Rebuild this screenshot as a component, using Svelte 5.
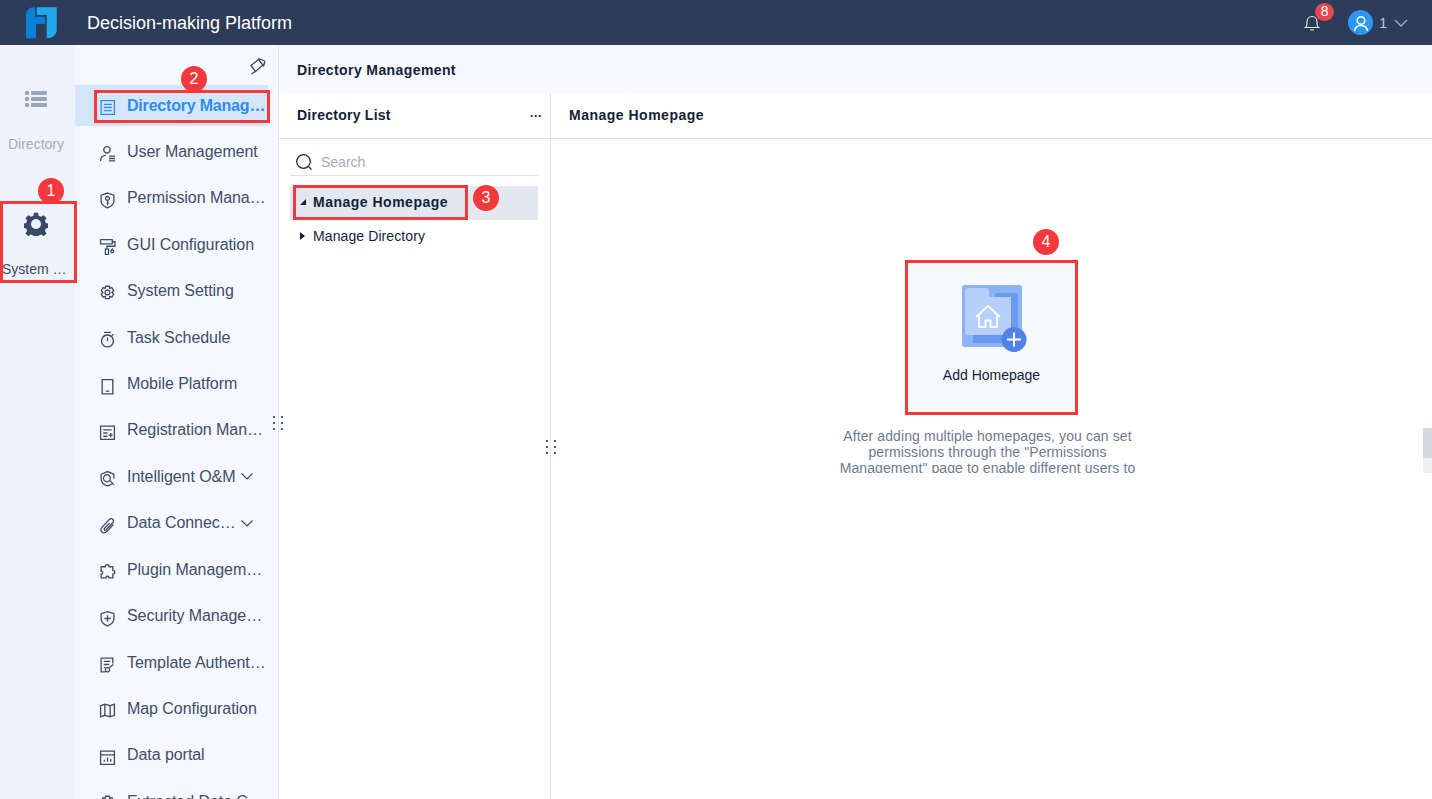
<script lang="ts">
// side menu, top to bottom
const menu = [
	{ label: "Directory Management", icon: "list", active: true },
	{ label: "User Management", icon: "user" },
	{ label: "Permission Management", icon: "shield" },
	{ label: "GUI Configuration", icon: "roller" },
	{ label: "System Setting", icon: "gear" },
	{ label: "Task Schedule", icon: "timer" },
	{ label: "Mobile Platform", icon: "phone" },
	{ label: "Registration Management", icon: "reg" },
	{ label: "Intelligent O&M", icon: "search", more: true },
	{ label: "Data Connection", icon: "clip", more: true },
	{ label: "Plugin Management", icon: "plugin" },
	{ label: "Security Management", icon: "secure" },
	{ label: "Template Authentication", icon: "template" },
	{ label: "Map Configuration", icon: "map" },
	{ label: "Data portal", icon: "portal" },
	{ label: "Extracted Data Configuration", icon: "gear" },
];

const icons: Record<string, string> = {
	list: "M2 1.500h12.500v13H2zM4.500 5h7.500M4.500 8h7.500M4.500 11h7.500",
	user: "M7.500 1.500a3 3 0 1 1-.01 0zM1.500 15c0-3.200 2-5.200 5-5.500M9.500 10.500h5.500M9.500 12.700h5.500M9.500 15h5.500",
	shield: "M8 1l6 2v5.500c0 3-2.500 5.200-6 6.500-3.500-1.300-6-3.500-6-6.500V3zM8 4.200a1.800 1.800 0 1 1-.01 0zM8 7.800v4.700M8 10.500h1.500",
	roller: "M1.500 1.500h11v4h-11zM12.500 3.500h2.500v4.300H7.500v2.700M6 10.500h3v5H6zM12.500 10.500l1.200 1.500a1.300 1.300 0 1 1-2.400 0z",
	gear: "M6.300 1.200h3.400l.500 2 1.900-.700 1.700 2.900-1.500 1.600 1.500 1.600-1.700 2.900-1.900-.700-.500 2H6.300l-.500-2-1.900.700-1.700-2.900L3.700 7 2.200 5.400l1.700-2.900 1.900.700zM8 4.700a2.300 2.300 0 1 1-.01 0z",
	timer: "M8 3.800a5.600 5.600 0 1 1-.01 0zM4.800 1.300h6.400M8 6v3.500M12.300 4.200l1.200-1.200",
	phone: "M3 1.500h10v13.500H3zM6.300 12.300h3.400",
	reg: "M1.500 2h13v12.500h-13zM4 5.500h8M4 8.500h4M4 11.500h4M11 8.500v4M9 10.500h4",
	search: "M2 4l6-2.500L14 4v4M13 12.500c-1.500 1.300-3.200 2-5 2.500-3.500-1-6-3.500-6-7V4M7.500 4.500a3.300 3.300 0 1 1-.01 0zM10 9.500l4 4.500",
	clip: "M13.500 7l-6 6.500c-1.500 1.500-3.500 1.800-4.800.600-1.300-1.300-.900-3.300.500-4.800l6.300-6.800c1-1 2.500-1.200 3.500-.300 1 1 .700 2.400-.300 3.400l-6 6.400c-.500.500-1.200.600-1.600.200-.400-.400-.300-1.100.200-1.600l4.700-5.100",
	plugin: "M6 3.500c0-2.500 3.500-2.500 3.500 0H13v3.500c2.500 0 2.500 3.500 0 3.500v3.500H9.500c0-2-3-2-3 0H2v-3.500c2 0 2-3 0-3V3.500z",
	secure: "M8 1.500l6 2v5c0 3-2.500 5-6 6.500-3.500-1.500-6-3.500-6-6.500v-5zM8 5v6M5 8h6",
	template: "M13 7V2H2v13h4M4.500 5h6M4.500 8h5M4.500 11h1.500M8 11a2 2 0 1 1-.01 0zM9.500 11l4-3",
	map: "M1.500 3.500l4-1.500 5 1.500 4-1.500v10.500l-4 1.500-5-1.500-4 1.500zM5.500 2v10.500M10.500 3.500V14",
	portal: "M1.500 2h13v12.500h-13zM1.500 5.500h13M5 12V10M8 12V8M11 12V9.500",
};

const handles = [
	{ x: 270, y: 414 },
	{ x: 543, y: 438 },
];

const marks = [
	{ n: 1, x: 38, y: 178 },
	{ n: 2, x: 181, y: 66 },
	{ n: 3, x: 473, y: 185 },
	{ n: 4, x: 1033, y: 229 },
];

const boxes = [
	{ x: 0, y: 201, w: 77, h: 82 },
	{ x: 94, y: 90, w: 176, h: 33 },
	{ x: 293, y: 185, w: 175, h: 35 },
	{ x: 905, y: 260, w: 173, h: 155 },
];
</script>

<div class="app">
	<header class="top">
		<svg class="logo" viewBox="0 0 32 32" width="32" height="32">
			<path fill="#0b80d8" d="M1 8C1 3.500 4.500.3 8.500.3H10v9.400h10V17h-9v14.300H1z" />
			<path fill="#1fa8ec" d="M11.700.3h20V23c0 4.500-4 8.300-9.700 8.300h-.3V8h-10z" />
		</svg>
		<div class="brand">Decision-making Platform</div>
		<div class="top-right">
			<div class="bell">
				<svg viewBox="0 0 18 18" width="18" height="18" fill="none" stroke="#e4e7ec" stroke-width="1.200">
					<path d="M2.500 13.500c1.500-1 1.500-3 1.500-5.500 0-3 2-5.500 5-5.500s5 2.500 5 5.500c0 2.500 0 4.500 1.500 5.500zM7 16h4" />
				</svg>
				<span class="count">8</span>
			</div>
			<div class="avatar">
				<svg viewBox="0 0 24 24" width="24" height="24" fill="none" stroke="#fff" stroke-width="1.600">
					<circle cx="12" cy="9.500" r="3.800" />
					<path d="M5.500 20c.5-3.500 3-5.500 6.500-5.500s6 2 6.500 5.500" />
				</svg>
			</div>
			<span class="uname">1</span>
			<svg class="caret" viewBox="0 0 14 8" width="14" height="8" fill="none" stroke="#a3adbc" stroke-width="1.300">
				<path d="M1 1l6 6 6-6" />
			</svg>
		</div>
	</header>

	<div class="body">
		<nav class="rail">
			<div class="rail-item dir">
				<svg viewBox="0 0 24 20" width="24" height="20" fill="#9aa5b8">
					<rect x="1" y="2" width="4" height="4" rx="1" />
					<rect x="7" y="2" width="16" height="4" rx="1" />
					<rect x="1" y="8" width="4" height="4" rx="1" />
					<rect x="7" y="8" width="16" height="4" rx="1" />
					<rect x="1" y="14" width="4" height="4" rx="1" />
					<rect x="7" y="14" width="16" height="4" rx="1" />
				</svg>
				<span>Directory</span>
			</div>
			<div class="rail-item sys">
				<svg viewBox="0 0 24 24" width="24" height="24">
					<path fill="#3a4a66" fill-rule="evenodd" d="M10 .8h4l.7 3 2.300 1 2.700-1.600 2.800 2.800-1.600 2.700 1 2.300 3 .7v4l-3 .7-1 2.300 1.600 2.700-2.800 2.800-2.700-1.600-2.300 1-.7 3h-4l-.7-3-2.300-1-2.700 1.600-2.800-2.800 1.600-2.700-1-2.300-3-.7v-4l3-.7 1-2.300-1.600-2.700 2.800-2.800 2.700 1.600 2.300-1zM12 7a5 5 0 1 0 .01 0z" />
				</svg>
				<span class="ell">System Management</span>
			</div>
		</nav>

		<aside class="menu">
			<div class="pin">
				<svg viewBox="0 0 18 18" width="18" height="18" fill="none" stroke="#3a4a66" stroke-width="1.300">
					<path d="M2 8.500l7.500-6L14 8l-7.500 6.500zM9 1.500l7 2.500M14.500 9.500L16 4M6 14.500L2.500 17" />
				</svg>
			</div>
			<ul>
				{#each menu as item}
					<li class:active={item.active}>
						<svg class="ico" viewBox="0 0 16 16" width="17" height="17" fill="none" stroke="currentColor" stroke-width="1.250">
							<path d={icons[item.icon]} />
						</svg>
						<span class="label" class:short={item.more}>{item.label}</span>
						{#if item.more}
							<svg class="chev" viewBox="0 0 12 7" width="12" height="7" fill="none" stroke="#3a4a66" stroke-width="1.200">
								<path d="M.5.500L6 6 11.500.500" />
							</svg>
						{/if}
					</li>
				{/each}
			</ul>
		</aside>

		<main class="content">
			<div class="crumb">Directory Management</div>
			<div class="panels">
				<section class="list">
					<div class="head">
						<span class="list-title">Directory List</span>
						<span class="dots">···</span>
					</div>
					<div class="search">
						<svg viewBox="0 0 18 18" width="18" height="18" fill="none" stroke="#1f2d45" stroke-width="1.300">
							<circle cx="8.500" cy="8.500" r="6.800" />
							<path d="M13.500 13.500l3 3" />
						</svg>
						<span>Search</span>
					</div>
					<div class="node open"><i></i>Manage Homepage</div>
					<div class="node"><i></i>Manage Directory</div>
				</section>
				<section class="home">
					<div class="head">Manage Homepage</div>
					<div class="empty">
						<button class="add">
							<svg viewBox="0 0 66 68" width="66" height="68">
								<rect x="0" y="0" width="60" height="62" rx="3" fill="#8cb2f6" />
								<rect x="33" y="8" width="23" height="50" rx="3" fill="#6a9af0" />
								<rect x="11" y="48" width="45" height="10" fill="#6a9af0" />
								<path fill="#b7d0fb" d="M3 6a3 3 0 0 1 3-3h18a3 3 0 0 1 3 3v6h22v38H6a3 3 0 0 1-3-3z" />
								<path fill="none" stroke="#fff" stroke-width="1.800" d="M14 32l12-11 12 11M17 29.500V42h6.500v-6.500h5V42H35V29.500" />
								<circle cx="52" cy="54.500" r="12.500" fill="#4f83e6" />
								<path stroke="#fff" stroke-width="2" d="M45 54.500h14M52 47.500v14" />
							</svg>
							<span>Add Homepage</span>
						</button>
						<p>After adding multiple homepages, you can set permissions through the "Permissions Management" page to enable different users to see different homepages.</p>
					</div>
					<div class="thumb"></div>
				</section>
			</div>
		</main>
	</div>

	{#each handles as h}
		<div class="handle" style="left: {h.x}px; top: {h.y}px"></div>
	{/each}
	{#each boxes as b}
		<div class="box" style="left: {b.x}px; top: {b.y}px; width: {b.w}px; height: {b.h}px"></div>
	{/each}
	{#each marks as m}
		<div class="mark" style="left: {m.x}px; top: {m.y}px">{m.n}</div>
	{/each}
</div>

<style>
:global(body) {
	margin: 0;
}

.app {
	position: relative;
	width: 1432px;
	height: 799px;
	overflow: hidden;
	font-family: "Liberation Sans", Arial, sans-serif;
	background: #fff;
}

.top {
	display: flex;
	align-items: center;
	height: 45px;
	padding: 0 24px 0 25px;
	background: #2c3c59;
	color: #fff;
}

.logo {
	margin-right: 30px;
}

.brand {
	padding-top: 2px;
	font-size: 18px;
}

.top-right {
	display: flex;
	align-items: center;
	margin-left: auto;
}

.bell {
	position: relative;
	display: flex;
	margin-right: 27px;
}

.count {
	position: absolute;
	top: -11px;
	left: 12px;
	width: 19px;
	height: 18px;
	border-radius: 9px;
	background: #e5484d;
	font-size: 14px;
	line-height: 17px;
	text-align: center;
}

.avatar {
	display: flex;
	align-items: center;
	justify-content: center;
	width: 25px;
	height: 25px;
	border-radius: 50%;
	background: #2d96f3;
}

.uname {
	margin: 0 7px 0 6px;
	font-size: 14px;
	color: #c4cad4;
}

.body {
	display: flex;
	height: 754px;
}

.rail {
	flex: none;
	width: 75px;
	padding-right: 3px;
	box-sizing: border-box;
	background: #edf2fc;
}

.rail-item {
	display: flex;
	flex-direction: column;
	align-items: center;
	font-size: 14px;
}

.rail-item.dir {
	padding-top: 44px;
	color: #a3adbe;
}

.rail-item.dir span {
	margin-top: 27px;
}

.rail-item.sys {
	padding-top: 60px;
	color: #3a4a66;
}

.rail-item.sys span {
	margin-top: 25px;
}

.ell {
	width: 68px;
	overflow: hidden;
	white-space: nowrap;
	text-overflow: ellipsis;
}

.menu {
	flex: none;
	width: 204px;
	box-sizing: border-box;
	border-right: 1px solid #e1e6ef;
	background: #f5f8ff;
}

.pin {
	display: flex;
	justify-content: flex-end;
	height: 40px;
	padding: 12px 11px 0 0;
	box-sizing: border-box;
}

.menu ul {
	margin: 0;
	padding: 0;
	list-style: none;
}

.menu li {
	display: flex;
	align-items: center;
	width: 193px;
	height: 41px;
	margin-bottom: 5.43px;
	padding-left: 24px;
	box-sizing: border-box;
	font-size: 16px;
	letter-spacing: -0.06px;
	color: #3f4e68;
}

.menu li.active {
	background: #d5e6fb;
	color: #2b8ef0;
	font-weight: bold;
	letter-spacing: -0.2px;
}

.ico {
	flex: none;
	margin: 4px 11px 0 0;
}

.label {
	flex: 1;
	min-width: 0;
	overflow: hidden;
	white-space: nowrap;
	text-overflow: ellipsis;
}

.label.short {
	flex: 0 0 113px;
}

.chev {
	flex: none;
	margin-left: 1px;
}

.content {
	flex: 1;
	display: flex;
	flex-direction: column;
	min-width: 0;
}

.crumb {
	height: 48px;
	padding-left: 18px;
	background: #f6f8fd;
	font-size: 14px;
	font-weight: bold;
	line-height: 50px;
	letter-spacing: 0.4px;
	color: #141f38;
}

.panels {
	flex: 1;
	display: flex;
	min-height: 0;
}

.list {
	flex: none;
	width: 271px;
	border-right: 1px solid #dde1e8;
}

.head {
	display: flex;
	align-items: center;
	justify-content: space-between;
	height: 45px;
	padding: 0 8px 0 18px;
	border-bottom: 1px solid #dde1e8;
	font-size: 14px;
	font-weight: bold;
	letter-spacing: 0.45px;
	color: #141f38;
}

.list-title {
	margin-top: -2px;
	letter-spacing: 0.25px;
}

.dots {
	font-size: 12px;
	letter-spacing: 0;
}

.search {
	display: flex;
	align-items: center;
	gap: 8px;
	height: 26px;
	margin: 0 12px 10px 11px;
	padding: 10px 0 0 5px;
	border-bottom: 1px solid #dde1e8;
	font-size: 14px;
	color: #a3abba;
}

.node {
	display: flex;
	align-items: center;
	height: 34px;
	margin: 0 12px 0 11px;
	padding: 0 0 2px 10px;
	box-sizing: border-box;
	font-size: 14px;
	letter-spacing: 0.1px;
	color: #141f38;
}

.node i {
	width: 0;
	height: 0;
	margin-right: 8px;
	border-top: 4px solid transparent;
	border-bottom: 4px solid transparent;
	border-left: 5px solid #141f38;
}

.node.open {
	background: #e3e7ef;
	font-weight: bold;
	letter-spacing: 0.5px;
}

.node.open i {
	margin-right: 7px;
	border-top: 6px solid transparent;
	border-bottom: 0;
	border-left: 0;
	border-right: 6px solid #141f38;
}

.home {
	position: relative;
	flex: 1;
	min-width: 0;
}

.home .head {
	display: block;
	padding: 0 0 0 18px;
	line-height: 45px;
	letter-spacing: 0.5px;
}

.empty {
	display: flex;
	flex-direction: column;
	align-items: center;
	padding-top: 122px;
}

.add {
	display: flex;
	flex-direction: column;
	align-items: center;
	width: 172px;
	height: 153px;
	padding: 24px 0 0;
	border: 0;
	background: #f7f8fc;
	font-family: inherit;
	font-size: 14px;
	color: #141f38;
}

.add svg {
	margin-left: 7px;
}

.add span {
	margin-top: 14px;
}

.empty p {
	width: 310px;
	height: 45px;
	margin: 14px 8px 0 0;
	overflow: hidden;
	font-size: 14px;
	line-height: 16px;
	letter-spacing: 0.1px;
	text-align: center;
	color: #6d7a90;
}

.thumb {
	position: absolute;
	top: 335px;
	right: 0;
	width: 9px;
	height: 45px;
	background: linear-gradient(#d5d8df 30px, #eff0f3 30px);
}

.handle {
	position: absolute;
	width: 16px;
	height: 18px;
	background-image: radial-gradient(circle, #4a5872 0.8px, transparent 1.1px);
	background-size: 8px 6px;
}

.box {
	position: absolute;
	box-sizing: border-box;
	border: 3px solid #f5383b;
}

.mark {
	position: absolute;
	width: 26px;
	height: 26px;
	border-radius: 50%;
	background: #f5383b;
	color: #fff;
	font-size: 16px;
	line-height: 26px;
	text-align: center;
}
</style>
